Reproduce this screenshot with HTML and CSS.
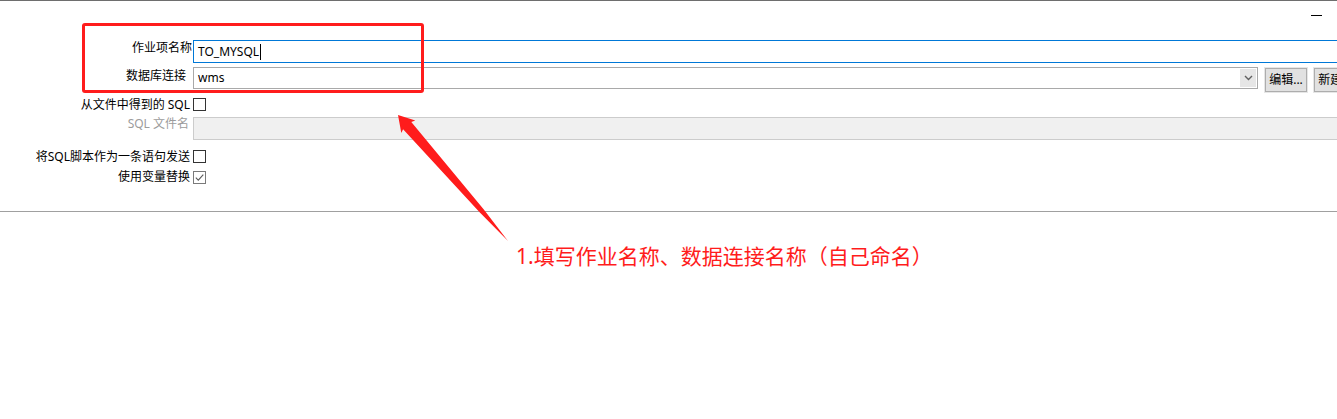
FILE: index.html
```html
<!DOCTYPE html>
<html lang="zh-CN">
<head>
<meta charset="utf-8">
<title>作业项</title>
<link rel="stylesheet" href="styles.css">
</head>
<body>
<div class="window">
  <div class="topbar"><span class="minimize"></span></div>
  <div class="form">
    <div class="row row-name">
      <label class="lbl lbl-name">作业项名称</label>
      <div class="input input-active"><span class="val">TO_MYSQL</span><span class="caret"></span></div>
    </div>
    <div class="row row-conn">
      <label class="lbl lbl-conn">数据库连接</label>
      <div class="conn-field">
        <div class="select">
          <span class="val">wms</span>
          <span class="select-arrow">
            <svg width="9" height="6" viewBox="0 0 9 6"><path d="M1 1 L4.5 4.5 L8 1" fill="none" stroke="#606060" stroke-width="1.4"/></svg>
          </span>
        </div>
        <button class="btn btn-edit">编辑...</button>
        <button class="btn btn-new">新建...</button>
      </div>
    </div>
    <div class="row row-check row-file">
      <label class="lbl lbl-check">从文件中得到的 SQL</label>
      <span class="checkbox"></span>
    </div>
    <div class="row row-filename">
      <label class="lbl lbl-check lbl-disabled">SQL 文件名</label>
      <div class="input input-disabled"></div>
    </div>
    <div class="row row-check row-single">
      <label class="lbl lbl-check">将SQL脚本作为一条语句发送</label>
      <span class="checkbox"></span>
    </div>
    <div class="row row-check row-vars">
      <label class="lbl lbl-check lbl-last">使用变量替换</label>
      <span class="checkbox checkbox-checked">
        <svg width="11" height="11" viewBox="0 0 11 11"><path d="M1.8 5.6 L4.3 8.1 L9.3 2.6" fill="none" stroke="#5a5a5a" stroke-width="1.1"/></svg>
      </span>
    </div>
  </div>
  <div class="separator"></div>
</div>

<div class="highlight-box"></div>
<svg class="arrow" width="1337" height="419" viewBox="0 0 1337 419">
  <polygon fill="#ff1c1c" points="398,115 415.3,120.6 411.3,121.9 483.4,209 508,241 479.6,212.3 403.1,129.2 401.3,132.9"/>
</svg>
<div class="note">1.填写作业名称、数据连接名称（自己命名）</div>
</body>
</html>
```
FILE: styles.css
```css
* { box-sizing: border-box; }

html, body {
  margin: 0;
  padding: 0;
  width: 1337px;
  height: 419px;
  overflow: hidden;
  background: #ffffff;
}

body {
  position: relative;
  font-family: "Noto Sans", "Noto Sans CJK SC", sans-serif;
  font-size: 12px;
  color: #000000;
}

.window {
  border-top: 1px solid #6e6e6e;
}

.topbar {
  height: 39px;
  display: flex;
  justify-content: flex-end;
}

.minimize {
  width: 11px;
  height: 1px;
  background: #000000;
  margin-top: 14px;
  margin-right: 15px;
}

.form {
  width: 1357px;
  display: flex;
  flex-direction: column;
}

.row {
  display: grid;
  grid-template-columns: 193px minmax(0, 1fr);
  align-items: start;
}

.lbl {
  justify-self: end;
  line-height: 16px;
  white-space: nowrap;
}

.row-name { height: 23px; }
.lbl-name { padding-right: 1px; }

.row-conn { height: 26px; margin-top: 4px; }
.lbl-conn { padding-right: 7px; margin-top: 1px; }

.row-check { height: 13px; }
.row-file { margin-top: 5px; }
.row-filename { height: 23px; margin-top: 6px; }
.row-single { margin-top: 10px; }
.row-vars { margin-top: 8px; }

.lbl-check { padding-right: 3px; margin-top: -1px; }
.lbl-last { margin-top: -2px; }
.lbl-disabled { color: #9c9c9c; padding-right: 4px; }

.input {
  height: 23px;
  border: 1px solid #7a7a7a;
  display: flex;
  align-items: center;
  padding-left: 4px;
  line-height: 16px;
}

.input-active { border-color: #0078d7; }

.input-disabled {
  background: #f0f0f0;
  border-color: #cccccc;
}

.caret {
  width: 1px;
  height: 16px;
  background: #000000;
  margin-left: 1px;
}

.conn-field {
  display: flex;
  align-items: flex-start;
}

.select {
  flex: 1;
  min-width: 0;
  height: 22px;
  border: 1px solid #a9a9a9;
  display: flex;
  align-items: center;
  justify-content: space-between;
  padding-left: 4px;
  padding-right: 1px;
  line-height: 16px;
}

.select-arrow {
  width: 16px;
  height: 18px;
  background: #e6e6e6;
  display: flex;
  align-items: center;
  justify-content: center;
}

.btn {
  flex: none;
  width: 44px;
  height: 26px;
  margin: 0;
  padding: 0;
  font: inherit;
  color: #000000;
  background: #e1e1e1;
  border: 1px solid #e6e6e6;
  box-shadow: inset 0 0 0 1px #adadad;
  line-height: 16px;
  text-align: center;
  white-space: nowrap;
}

.btn-edit { margin-left: 6px; }
.btn-new { margin-left: 5px; }

.checkbox {
  width: 13px;
  height: 13px;
  border: 1px solid #333333;
  background: #ffffff;
  display: flex;
  align-items: center;
  justify-content: center;
}

.checkbox-checked { border-color: #7a7a7a; }

.separator {
  height: 1px;
  margin-top: 27px;
  background: #a0a0a0;
}

.highlight-box {
  position: absolute;
  left: 82px;
  top: 23px;
  width: 342px;
  height: 70px;
  border: 3px solid #ff1c1c;
  border-radius: 3px;
}

.arrow {
  position: absolute;
  left: 0;
  top: 0;
  pointer-events: none;
}

.note {
  position: absolute;
  left: 516px;
  top: 244px;
  font-size: 21px;
  line-height: 24px;
  color: #ff1c1c;
  white-space: nowrap;
}
```
